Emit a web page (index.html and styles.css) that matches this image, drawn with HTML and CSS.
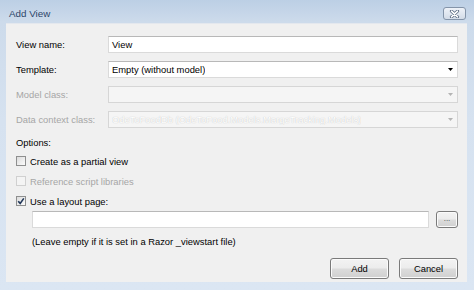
FILE: index.html
```html
<!DOCTYPE html>
<html>
<head>
<meta charset="utf-8">
<link rel="stylesheet" href="styles.css">
</head>
<body>
<div class="window">
  <div class="titlebar">
    <span class="title">Add View</span>
    <div class="close">
      <svg width="11" height="8" viewBox="0 0 11 8">
        <path d="M2.5 1.2 L8.5 6.8 M8.5 1.2 L2.5 6.8" stroke="#5b6b82" stroke-width="3.2" stroke-linecap="round" fill="none"/>
        <path d="M2.5 1.2 L8.5 6.8 M8.5 1.2 L2.5 6.8" stroke="#ffffff" stroke-width="1.6" stroke-linecap="round" fill="none"/>
      </svg>
    </div>
  </div>
  <div class="content">
    <div class="form">
      <span class="label">View name:</span>
      <div class="field">View</div>
      <span class="label">Template:</span>
      <div class="field select"><span>Empty (without model)</span><svg class="arrow" width="5" height="3" viewBox="0 0 5 3"><path d="M0 0H5L2.5 3Z" fill="#000"/></svg></div>
      <span class="label disabled">Model class:</span>
      <div class="field select off"><span></span><svg class="arrow" width="5" height="3" viewBox="0 0 5 3"><path d="M0 0H5L2.5 3Z" fill="#b4b4b4"/></svg></div>
      <span class="label disabled">Data context class:</span>
      <div class="field select off"><span class="ghost">OdeToFoodDb (OdeToFood.Models.MargeTracking.Models)</span><svg class="arrow" width="5" height="3" viewBox="0 0 5 3"><path d="M0 0H5L2.5 3Z" fill="#b4b4b4"/></svg></div>
    </div>
    <div class="options">Options:</div>
    <div class="check"><span class="box"></span><span>Create as a partial view</span></div>
    <div class="check disabled"><span class="box"></span><span>Reference script libraries</span></div>
    <div class="check"><span class="box"><svg width="8" height="8" viewBox="0 0 8 8"><path d="M1.2 4.2 L3.2 6.4 L6.8 1.4" stroke="#22385a" stroke-width="1.6" fill="none"/></svg></span><span>Use a layout page:</span></div>
    <div class="layout-row">
      <div class="field grow"></div>
      <div class="btn browse">...</div>
    </div>
    <div class="hint">(Leave empty if it is set in a Razor _viewstart file)</div>
    <div class="buttons">
      <div class="btn">Add</div>
      <div class="btn">Cancel</div>
    </div>
  </div>
</div>
</body>
</html>
```
FILE: styles.css
```css
body {
  margin: 0;
  font-family: "Liberation Sans", Arial, sans-serif;
  font-size: 9.4px;
  color: #000;
}
.window {
  width: 474px;
  height: 290px;
  display: flex;
  flex-direction: column;
  background: linear-gradient(180deg, #bccfe5 0px, #cddbeb 22px, #d6e2f0 120px, #dbe6f3 100%);
  overflow: hidden;
}
.titlebar {
  height: 23px;
  box-sizing: border-box;
  padding: 4px 8px 0 9px;
  display: flex;
  align-items: center;
  justify-content: space-between;
}
.title {
  color: #2d4568;
  font-size: 9.8px;
}
.close {
  width: 23px;
  height: 13px;
  box-sizing: border-box;
  border: 1px solid #8494a9;
  border-radius: 3px;
  background: linear-gradient(#eef2f8, #d3dce8);
  display: flex;
  align-items: center;
  justify-content: center;
}
.content {
  flex: 1;
  margin: 0 7px 8px 6px;
  background: #f0f0f0;
  box-shadow: inset 0 1px 0 #e4e8ee;
  padding: 13px 9px 3px 10px;
  display: flex;
  flex-direction: column;
}
.form {
  display: grid;
  grid-template-columns: 92px 1fr;
  row-gap: 8px;
  align-items: center;
}
.label {
  color: #000;
}
.disabled {
  color: #a6a6a6;
}
.field {
  height: 17px;
  box-sizing: border-box;
  background: #fff;
  border: 1px solid #dadada;
  border-top-color: #b8b8b8;
  padding: 0 3px;
  display: flex;
  align-items: center;
  white-space: nowrap;
  overflow: hidden;
}
.select {
  justify-content: space-between;
  padding-right: 4px;
}
.select span {
  overflow: hidden;
}
.arrow {
  flex: none;
}
.off {
  background: #f5f5f5;
  border-color: #d6d6d6;
}
.ghost {
  color: #ffffff;
  text-shadow: 0 0 1px #b4b4b4;
}
.options {
  margin-top: 7px;
  line-height: 16px;
}
.check {
  height: 20px;
  display: flex;
  align-items: center;
  gap: 4px;
}
.box {
  width: 10px;
  height: 10px;
  box-sizing: border-box;
  border: 1px solid #8e8f8f;
  background: linear-gradient(135deg, #dcdcdc, #fbfbfb);
  display: flex;
  align-items: center;
  justify-content: center;
}
.check.disabled .box {
  border-color: #d0d0d0;
  background: #f4f4f4;
}
.layout-row {
  margin-left: 16px;
  display: flex;
  gap: 7px;
}
.grow {
  flex: 1;
}
.btn {
  width: 59px;
  height: 21px;
  box-sizing: border-box;
  border: 1px solid #7a7a7a;
  border-radius: 3px;
  background: linear-gradient(180deg, #f3f3f3 0%, #ececec 48%, #dcdcdc 52%, #d0d0d0 100%);
  box-shadow: inset 0 0 0 1px #fbfbfb;
  display: flex;
  align-items: center;
  justify-content: center;
  color: #000;
}
.browse {
  width: 22px;
  height: 17px;
  color: #444;
  font-size: 8px;
  padding-bottom: 2px;
}
.hint {
  margin-left: 16px;
  margin-top: 6px;
  line-height: 16px;
}
.buttons {
  margin-top: auto;
  display: flex;
  justify-content: flex-end;
  gap: 10px;
}
```
